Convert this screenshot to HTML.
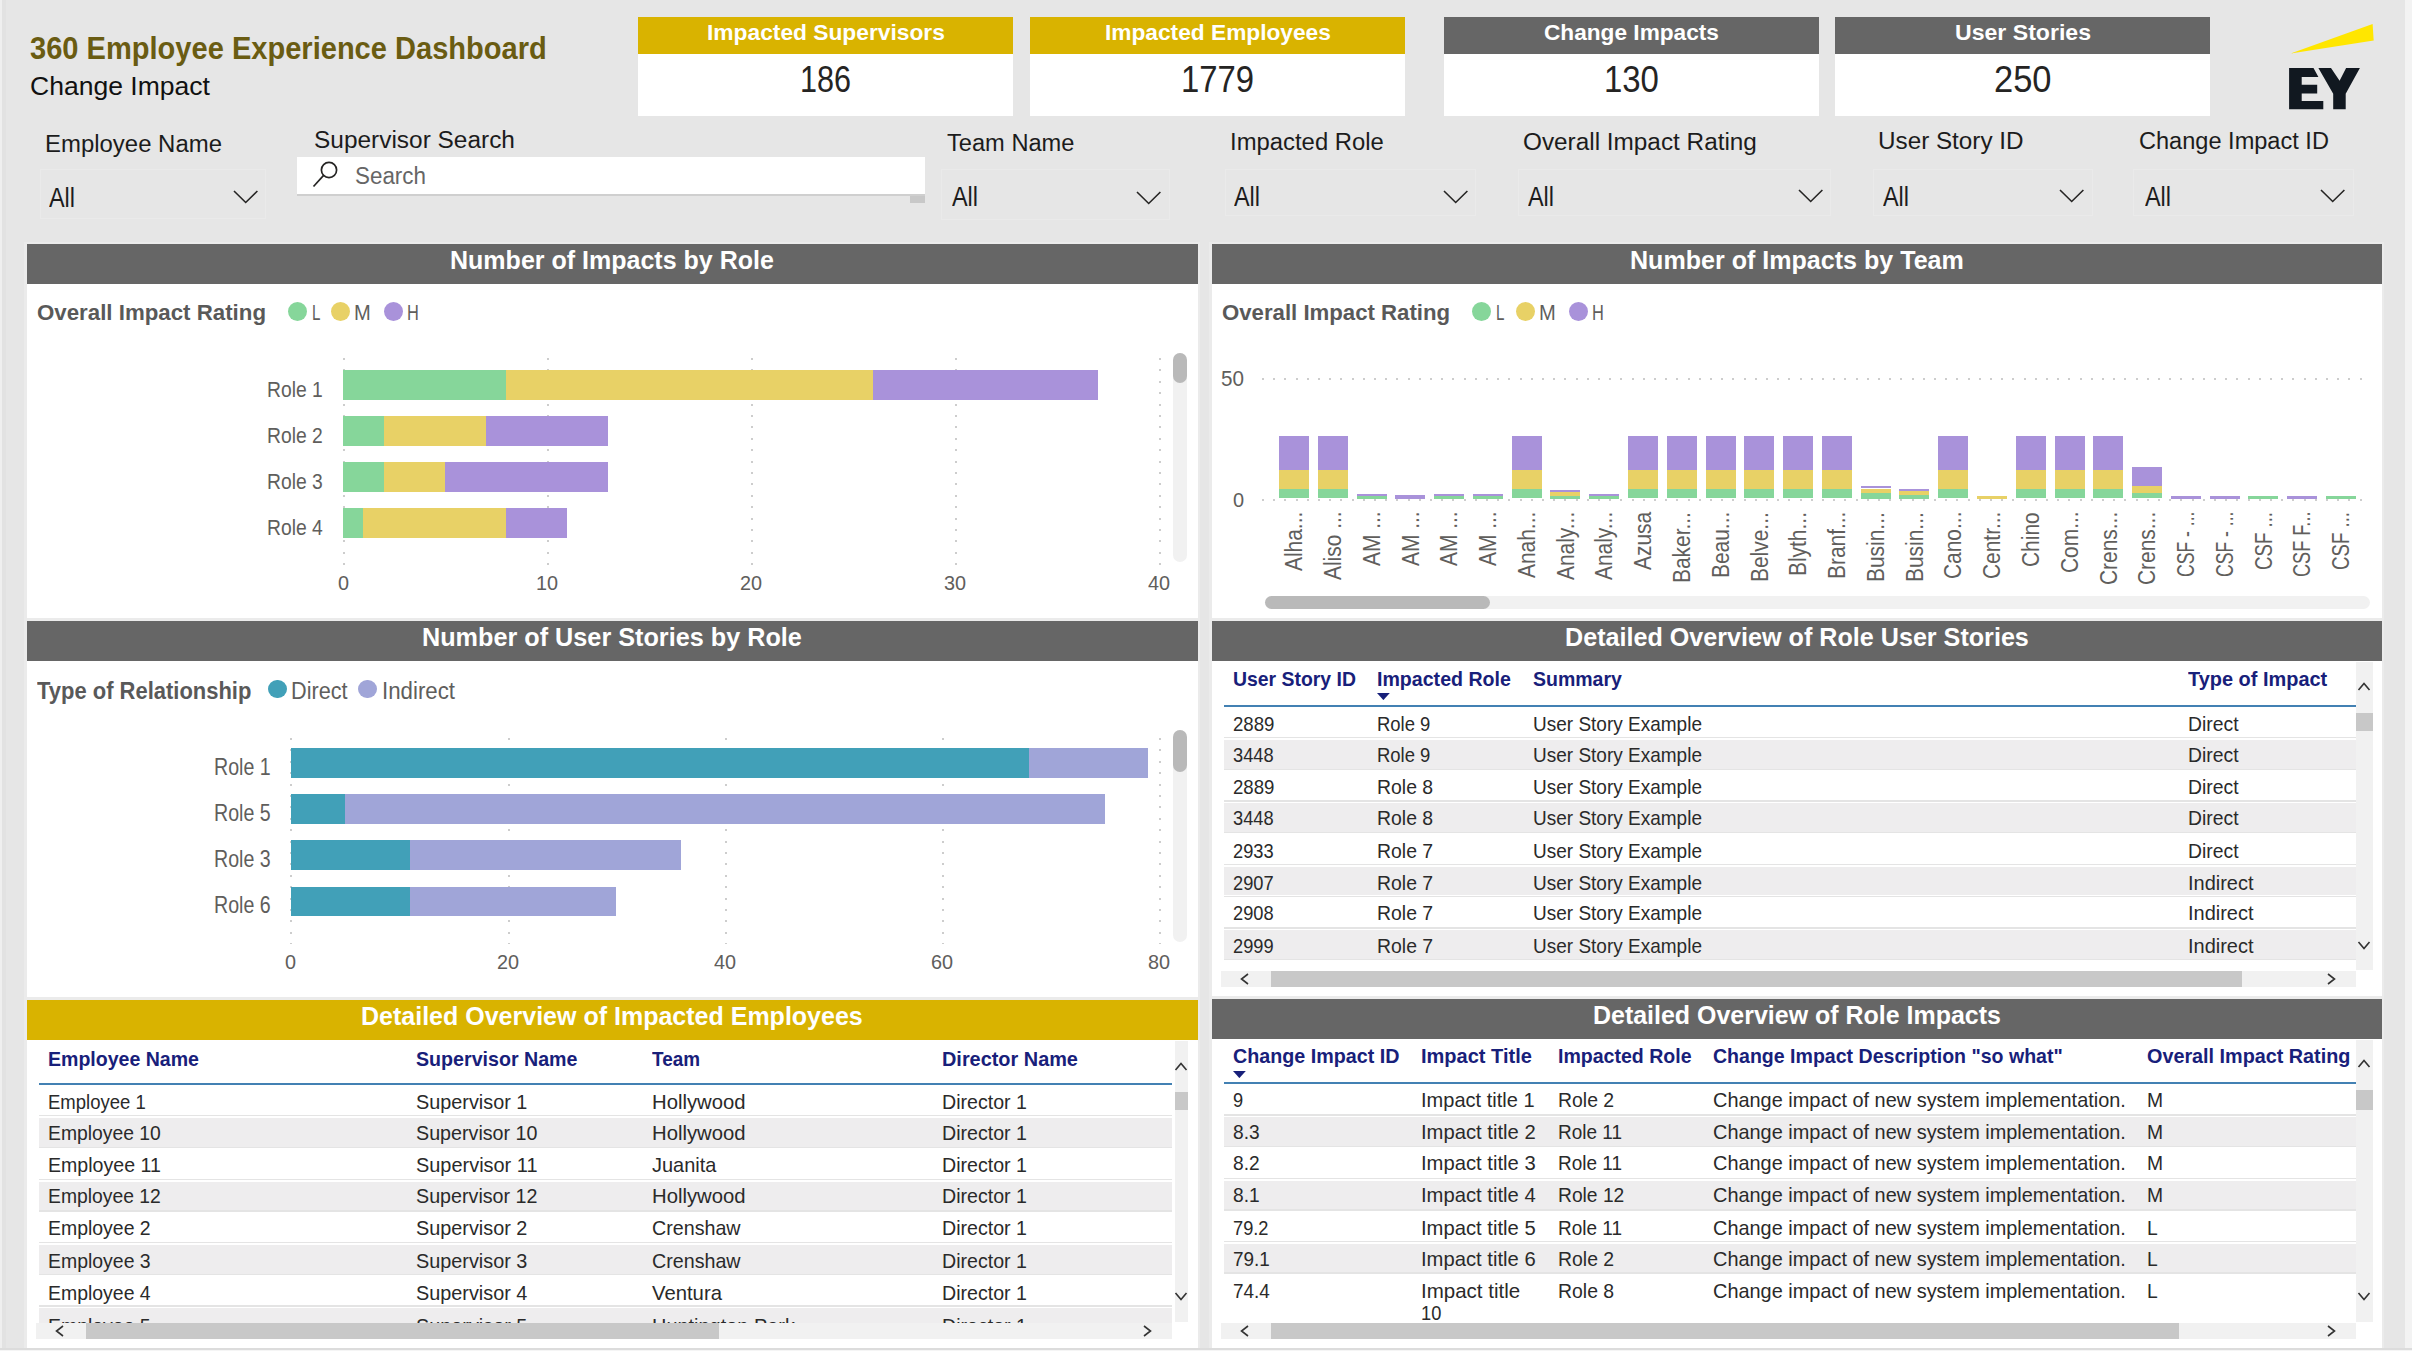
<!DOCTYPE html>
<html><head><meta charset="utf-8"><title>360 Employee Experience Dashboard</title>
<style>
html,body{margin:0;padding:0;}
body{width:2412px;height:1351px;overflow:hidden;position:relative;background:#e6e6e6;font-family:"Liberation Sans",sans-serif;}
.t{position:absolute;white-space:nowrap;transform-origin:0 0;}
.r{position:absolute;}
</style></head><body>
<div class="r" style="left:0.0px;top:0.0px;width:2.0px;height:1351.0px;background:#efefef;"></div>
<div class="r" style="left:2.0px;top:0.0px;width:4.0px;height:1351.0px;background:#e2e2e2;"></div>
<div class="r" style="left:2405.0px;top:0.0px;width:7.0px;height:1351.0px;background:#f3f3f3;"></div>
<div class="r" style="left:0.0px;top:1348.0px;width:2412.0px;height:2.0px;background:#dcdcdc;"></div>
<div class="r" style="left:0.0px;top:1350.0px;width:2412.0px;height:1.0px;background:#f5f5f5;"></div>
<div class="t" style="left:30.0px;top:32.6px;font:bold 30.43px/30.43px 'Liberation Sans',sans-serif;color:#6a5c12;transform:scaleX(0.9551);">360 Employee Experience Dashboard</div>
<div class="t" style="left:30.0px;top:73.3px;font:26.09px/26.09px 'Liberation Sans',sans-serif;color:#111111;transform:scaleX(1.0177);">Change Impact</div>
<div class="r" style="left:638.0px;top:17.0px;width:375.0px;height:36.5px;background:#d9b300;"></div>
<div class="r" style="left:638.0px;top:53.5px;width:375.0px;height:62.5px;background:#ffffff;"></div>
<div class="t" style="left:706.5px;top:21.0px;font:bold 22.90px/22.90px 'Liberation Sans',sans-serif;color:#ffffff;transform:scaleX(0.9946);">Impacted Supervisors</div>
<div class="t" style="left:800.0px;top:61.4px;font:37.68px/37.68px 'Liberation Sans',sans-serif;color:#252423;transform:scaleX(0.8105);">186</div>
<div class="r" style="left:1030.0px;top:17.0px;width:375.0px;height:36.5px;background:#d9b300;"></div>
<div class="r" style="left:1030.0px;top:53.5px;width:375.0px;height:62.5px;background:#ffffff;"></div>
<div class="t" style="left:1104.5px;top:21.0px;font:bold 22.90px/22.90px 'Liberation Sans',sans-serif;color:#ffffff;transform:scaleX(0.9919);">Impacted Employees</div>
<div class="t" style="left:1181.0px;top:61.4px;font:37.68px/37.68px 'Liberation Sans',sans-serif;color:#252423;transform:scaleX(0.8707);">1779</div>
<div class="r" style="left:1444.0px;top:17.0px;width:375.0px;height:36.5px;background:#666666;"></div>
<div class="r" style="left:1444.0px;top:53.5px;width:375.0px;height:62.5px;background:#ffffff;"></div>
<div class="t" style="left:1544.0px;top:21.0px;font:bold 22.90px/22.90px 'Liberation Sans',sans-serif;color:#ffffff;transform:scaleX(0.9893);">Change Impacts</div>
<div class="t" style="left:1604.0px;top:61.4px;font:37.68px/37.68px 'Liberation Sans',sans-serif;color:#252423;transform:scaleX(0.8740);">130</div>
<div class="r" style="left:1835.0px;top:17.0px;width:375.0px;height:36.5px;background:#666666;"></div>
<div class="r" style="left:1835.0px;top:53.5px;width:375.0px;height:62.5px;background:#ffffff;"></div>
<div class="t" style="left:1954.5px;top:21.0px;font:bold 22.90px/22.90px 'Liberation Sans',sans-serif;color:#ffffff;transform:scaleX(1.0084);">User Stories</div>
<div class="t" style="left:1993.7px;top:61.4px;font:37.68px/37.68px 'Liberation Sans',sans-serif;color:#252423;transform:scaleX(0.9153);">250</div>
<svg class="r" style="left:2280px;top:15px;" width="110" height="105" viewBox="0 0 110 105"><polygon points="10.6,38.5 92.6,8.9 93.7,25.6" fill="#ffe600"/><polygon points="9.1,53.1 33.5,53.1 38.4,62.1 21.7,62.1 21.7,69.8 37.2,69.8 37.2,78.4 21.7,78.4 21.7,86.1 43.3,86.1 43.3,94.3 9.1,94.3" fill="#111820"/><polygon points="38.4,53.1 51,53.1 59.6,65.8 66.1,53.1 79.9,53.1 65.7,78.8 65.7,94.3 53.2,94.3 53.2,78.8" fill="#111820"/></svg>
<div class="t" style="left:45.0px;top:131.5px;font:24.64px/24.64px 'Liberation Sans',sans-serif;color:#1c1c1c;transform:scaleX(0.9721);">Employee Name</div>
<div class="r" style="left:39.5px;top:169.0px;width:226.5px;height:49.5px;background:transparent;border:1.5px solid #eaeaea;box-sizing:border-box"></div>
<div class="t" style="left:49.0px;top:184.7px;font:26.81px/26.81px 'Liberation Sans',sans-serif;color:#1c1c1c;transform:scaleX(0.8736);">All</div>
<svg class="r" style="left:231.6px;top:189px;" width="27.4" height="15.5" viewBox="0 0 27.4 15.5"><polyline points="2,2 13.7,13.5 25.4,2" fill="none" stroke="#252423" stroke-width="1.6"/></svg>
<div class="t" style="left:947.0px;top:131.3px;font:24.64px/24.64px 'Liberation Sans',sans-serif;color:#1c1c1c;transform:scaleX(0.9601);">Team Name</div>
<div class="r" style="left:941.0px;top:169.0px;width:229.0px;height:51.0px;background:transparent;border:1.5px solid #eaeaea;box-sizing:border-box"></div>
<div class="t" style="left:952.0px;top:184.4px;font:26.81px/26.81px 'Liberation Sans',sans-serif;color:#1c1c1c;transform:scaleX(0.8736);">All</div>
<svg class="r" style="left:1134.6px;top:189.7px;" width="27.4" height="15.5" viewBox="0 0 27.4 15.5"><polyline points="2,2 13.7,13.5 25.4,2" fill="none" stroke="#252423" stroke-width="1.6"/></svg>
<div class="t" style="left:1230.0px;top:129.5px;font:24.64px/24.64px 'Liberation Sans',sans-serif;color:#1c1c1c;transform:scaleX(0.9691);">Impacted Role</div>
<div class="r" style="left:1225.0px;top:169.0px;width:251.0px;height:47.0px;background:transparent;border:1.5px solid #eaeaea;box-sizing:border-box"></div>
<div class="t" style="left:1234.0px;top:183.7px;font:26.81px/26.81px 'Liberation Sans',sans-serif;color:#1c1c1c;transform:scaleX(0.8736);">All</div>
<svg class="r" style="left:1441.6px;top:188.5px;" width="27.4" height="15.5" viewBox="0 0 27.4 15.5"><polyline points="2,2 13.7,13.5 25.4,2" fill="none" stroke="#252423" stroke-width="1.6"/></svg>
<div class="t" style="left:1523.0px;top:129.5px;font:24.64px/24.64px 'Liberation Sans',sans-serif;color:#1c1c1c;transform:scaleX(0.9878);">Overall Impact Rating</div>
<div class="r" style="left:1518.0px;top:169.0px;width:313.0px;height:47.0px;background:transparent;border:1.5px solid #eaeaea;box-sizing:border-box"></div>
<div class="t" style="left:1528.0px;top:183.5px;font:26.81px/26.81px 'Liberation Sans',sans-serif;color:#1c1c1c;transform:scaleX(0.8736);">All</div>
<svg class="r" style="left:1796.6px;top:188px;" width="27.4" height="15.5" viewBox="0 0 27.4 15.5"><polyline points="2,2 13.7,13.5 25.4,2" fill="none" stroke="#252423" stroke-width="1.6"/></svg>
<div class="t" style="left:1878.0px;top:129.2px;font:24.64px/24.64px 'Liberation Sans',sans-serif;color:#1c1c1c;transform:scaleX(0.9849);">User Story ID</div>
<div class="r" style="left:1873.0px;top:169.0px;width:220.0px;height:47.0px;background:transparent;border:1.5px solid #eaeaea;box-sizing:border-box"></div>
<div class="t" style="left:1883.0px;top:183.5px;font:26.81px/26.81px 'Liberation Sans',sans-serif;color:#1c1c1c;transform:scaleX(0.8736);">All</div>
<svg class="r" style="left:2057.6px;top:188px;" width="27.4" height="15.5" viewBox="0 0 27.4 15.5"><polyline points="2,2 13.7,13.5 25.4,2" fill="none" stroke="#252423" stroke-width="1.6"/></svg>
<div class="t" style="left:2139.0px;top:129.2px;font:24.64px/24.64px 'Liberation Sans',sans-serif;color:#1c1c1c;transform:scaleX(0.9568);">Change Impact ID</div>
<div class="r" style="left:2133.0px;top:169.0px;width:221.0px;height:47.0px;background:transparent;border:1.5px solid #eaeaea;box-sizing:border-box"></div>
<div class="t" style="left:2145.0px;top:183.5px;font:26.81px/26.81px 'Liberation Sans',sans-serif;color:#1c1c1c;transform:scaleX(0.8736);">All</div>
<svg class="r" style="left:2318.6px;top:188px;" width="27.4" height="15.5" viewBox="0 0 27.4 15.5"><polyline points="2,2 13.7,13.5 25.4,2" fill="none" stroke="#252423" stroke-width="1.6"/></svg>
<div class="t" style="left:313.5px;top:127.5px;font:23.91px/23.91px 'Liberation Sans',sans-serif;color:#1c1c1c;transform:scaleX(1.0219);">Supervisor Search</div>
<div class="r" style="left:297.0px;top:157.0px;width:628.0px;height:37.0px;background:#ffffff;"></div>
<div class="r" style="left:297.0px;top:194.0px;width:628.0px;height:2.0px;background:#cfcfcf;"></div>
<div class="r" style="left:910.0px;top:196.0px;width:15.0px;height:6.6px;background:#c8c8c8;"></div>
<svg class="r" style="left:308px;top:158px;" width="32" height="32" viewBox="0 0 32 32"><circle cx="21" cy="12" r="7.6" fill="none" stroke="#252423" stroke-width="1.7"/><line x1="15.6" y1="17.4" x2="5.5" y2="28.5" stroke="#252423" stroke-width="1.7"/></svg>
<div class="t" style="left:355.0px;top:163.9px;font:24.64px/24.64px 'Liberation Sans',sans-serif;color:#666666;transform:scaleX(0.9091);">Search</div>
<div class="r" style="left:24.3px;top:241.5px;width:1176.2px;height:378.5px;background:#ebebeb;"></div>
<div class="r" style="left:26.8px;top:284.0px;width:1171.2px;height:333.5px;background:#ffffff;"></div>
<div class="r" style="left:26.8px;top:244.0px;width:1171.2px;height:40.0px;background:#666666;"></div>
<div class="t" style="left:450.4px;top:247.3px;font:bold 26.09px/26.09px 'Liberation Sans',sans-serif;color:#ffffff;transform:scaleX(0.9594);">Number of Impacts by Role</div>
<div class="r" style="left:1209.0px;top:241.5px;width:1175.0px;height:378.5px;background:#ebebeb;"></div>
<div class="r" style="left:1211.5px;top:284.0px;width:1170.0px;height:333.5px;background:#ffffff;"></div>
<div class="r" style="left:1211.5px;top:244.0px;width:1170.0px;height:40.0px;background:#666666;"></div>
<div class="t" style="left:1629.5px;top:247.3px;font:bold 26.09px/26.09px 'Liberation Sans',sans-serif;color:#ffffff;transform:scaleX(0.9612);">Number of Impacts by Team</div>
<div class="r" style="left:24.3px;top:618.5px;width:1176.2px;height:380.5px;background:#ebebeb;"></div>
<div class="r" style="left:26.8px;top:661.0px;width:1171.2px;height:335.5px;background:#ffffff;"></div>
<div class="r" style="left:26.8px;top:621.0px;width:1171.2px;height:40.0px;background:#666666;"></div>
<div class="t" style="left:422.4px;top:624.3px;font:bold 26.09px/26.09px 'Liberation Sans',sans-serif;color:#ffffff;transform:scaleX(0.9672);">Number of User Stories by Role</div>
<div class="r" style="left:1209.0px;top:618.5px;width:1175.0px;height:380.0px;background:#ebebeb;"></div>
<div class="r" style="left:1211.5px;top:661.0px;width:1170.0px;height:335.0px;background:#ffffff;"></div>
<div class="r" style="left:1211.5px;top:621.0px;width:1170.0px;height:40.0px;background:#666666;"></div>
<div class="t" style="left:1564.5px;top:624.3px;font:bold 26.09px/26.09px 'Liberation Sans',sans-serif;color:#ffffff;transform:scaleX(0.9640);">Detailed Overview of Role User Stories</div>
<div class="r" style="left:24.3px;top:997.5px;width:1176.2px;height:350.5px;background:#ebebeb;"></div>
<div class="r" style="left:26.8px;top:1040.0px;width:1171.2px;height:308.0px;background:#ffffff;"></div>
<div class="r" style="left:26.8px;top:1000.0px;width:1171.2px;height:40.0px;background:#d9b300;"></div>
<div class="t" style="left:361.4px;top:1003.3px;font:bold 26.09px/26.09px 'Liberation Sans',sans-serif;color:#ffffff;transform:scaleX(0.9590);">Detailed Overview of Impacted Employees</div>
<div class="r" style="left:1209.0px;top:996.5px;width:1175.0px;height:351.5px;background:#ebebeb;"></div>
<div class="r" style="left:1211.5px;top:1039.0px;width:1170.0px;height:309.0px;background:#ffffff;"></div>
<div class="r" style="left:1211.5px;top:999.0px;width:1170.0px;height:40.0px;background:#666666;"></div>
<div class="t" style="left:1592.5px;top:1002.3px;font:bold 26.09px/26.09px 'Liberation Sans',sans-serif;color:#ffffff;transform:scaleX(0.9572);">Detailed Overview of Role Impacts</div>
<div class="t" style="left:36.6px;top:301.7px;font:bold 22.61px/22.61px 'Liberation Sans',sans-serif;color:#595959;transform:scaleX(0.9853);">Overall Impact Rating</div>
<div class="r" style="left:287.5px;top:302.0px;width:19px;height:19px;border-radius:50%;background:#86d69a"></div>
<div class="t" style="left:312.0px;top:301.7px;font:22.61px/22.61px 'Liberation Sans',sans-serif;color:#605e5c;transform:scaleX(0.6694);">L</div>
<div class="r" style="left:330.5px;top:302.0px;width:19px;height:19px;border-radius:50%;background:#e8d166"></div>
<div class="t" style="left:354.0px;top:301.7px;font:22.61px/22.61px 'Liberation Sans',sans-serif;color:#605e5c;transform:scaleX(0.8899);">M</div>
<div class="r" style="left:383.5px;top:302.0px;width:19px;height:19px;border-radius:50%;background:#a992da"></div>
<div class="t" style="left:407.0px;top:301.7px;font:22.61px/22.61px 'Liberation Sans',sans-serif;color:#605e5c;transform:scaleX(0.7249);">H</div>
<div class="t" style="left:1221.7px;top:301.7px;font:bold 22.61px/22.61px 'Liberation Sans',sans-serif;color:#595959;transform:scaleX(0.9810);">Overall Impact Rating</div>
<div class="r" style="left:1472.0px;top:302.0px;width:19px;height:19px;border-radius:50%;background:#86d69a"></div>
<div class="t" style="left:1496.0px;top:301.7px;font:22.61px/22.61px 'Liberation Sans',sans-serif;color:#605e5c;transform:scaleX(0.6694);">L</div>
<div class="r" style="left:1515.5px;top:302.0px;width:19px;height:19px;border-radius:50%;background:#e8d166"></div>
<div class="t" style="left:1539.3px;top:301.7px;font:22.61px/22.61px 'Liberation Sans',sans-serif;color:#605e5c;transform:scaleX(0.8899);">M</div>
<div class="r" style="left:1568.8px;top:302.0px;width:19px;height:19px;border-radius:50%;background:#a992da"></div>
<div class="t" style="left:1592.0px;top:301.7px;font:22.61px/22.61px 'Liberation Sans',sans-serif;color:#605e5c;transform:scaleX(0.7249);">H</div>
<div class="r" style="left:342.9px;top:358.0px;width:2px;height:208.0px;background:repeating-linear-gradient(to bottom,#cdcdcd 0 2px,transparent 2px 11.4px)"></div>
<div class="t" style="left:337.5px;top:573.0px;font:20.87px/20.87px 'Liberation Sans',sans-serif;color:#605e5c;transform:scaleX(0.9500);">0</div>
<div class="r" style="left:546.9px;top:358.0px;width:2px;height:208.0px;background:repeating-linear-gradient(to bottom,#cdcdcd 0 2px,transparent 2px 11.4px)"></div>
<div class="t" style="left:536.0px;top:573.0px;font:20.87px/20.87px 'Liberation Sans',sans-serif;color:#605e5c;transform:scaleX(0.9500);">10</div>
<div class="r" style="left:750.9px;top:358.0px;width:2px;height:208.0px;background:repeating-linear-gradient(to bottom,#cdcdcd 0 2px,transparent 2px 11.4px)"></div>
<div class="t" style="left:740.0px;top:573.0px;font:20.87px/20.87px 'Liberation Sans',sans-serif;color:#605e5c;transform:scaleX(0.9500);">20</div>
<div class="r" style="left:954.9px;top:358.0px;width:2px;height:208.0px;background:repeating-linear-gradient(to bottom,#cdcdcd 0 2px,transparent 2px 11.4px)"></div>
<div class="t" style="left:944.0px;top:573.0px;font:20.87px/20.87px 'Liberation Sans',sans-serif;color:#605e5c;transform:scaleX(0.9500);">30</div>
<div class="r" style="left:1158.9px;top:358.0px;width:2px;height:208.0px;background:repeating-linear-gradient(to bottom,#cdcdcd 0 2px,transparent 2px 11.4px)"></div>
<div class="t" style="left:1148.0px;top:573.0px;font:20.87px/20.87px 'Liberation Sans',sans-serif;color:#605e5c;transform:scaleX(0.9500);">40</div>
<div class="r" style="left:343.0px;top:370.0px;width:163.2px;height:30.0px;background:#86d69a;"></div>
<div class="r" style="left:506.2px;top:370.0px;width:367.2px;height:30.0px;background:#e8d166;"></div>
<div class="r" style="left:873.4px;top:370.0px;width:224.4px;height:30.0px;background:#a992da;"></div>
<div class="t" style="left:266.5px;top:377.8px;font:22.90px/22.90px 'Liberation Sans',sans-serif;color:#605e5c;transform:scaleX(0.8432);">Role 1</div>
<div class="r" style="left:343.0px;top:416.0px;width:40.8px;height:30.0px;background:#86d69a;"></div>
<div class="r" style="left:383.8px;top:416.0px;width:102.0px;height:30.0px;background:#e8d166;"></div>
<div class="r" style="left:485.8px;top:416.0px;width:122.4px;height:30.0px;background:#a992da;"></div>
<div class="t" style="left:266.5px;top:423.8px;font:22.90px/22.90px 'Liberation Sans',sans-serif;color:#605e5c;transform:scaleX(0.8432);">Role 2</div>
<div class="r" style="left:343.0px;top:462.0px;width:40.8px;height:30.0px;background:#86d69a;"></div>
<div class="r" style="left:383.8px;top:462.0px;width:61.2px;height:30.0px;background:#e8d166;"></div>
<div class="r" style="left:445.0px;top:462.0px;width:163.2px;height:30.0px;background:#a992da;"></div>
<div class="t" style="left:266.5px;top:469.8px;font:22.90px/22.90px 'Liberation Sans',sans-serif;color:#605e5c;transform:scaleX(0.8432);">Role 3</div>
<div class="r" style="left:343.0px;top:508.0px;width:20.4px;height:30.0px;background:#86d69a;"></div>
<div class="r" style="left:363.4px;top:508.0px;width:142.8px;height:30.0px;background:#e8d166;"></div>
<div class="r" style="left:506.2px;top:508.0px;width:61.2px;height:30.0px;background:#a992da;"></div>
<div class="t" style="left:266.5px;top:515.8px;font:22.90px/22.90px 'Liberation Sans',sans-serif;color:#605e5c;transform:scaleX(0.8432);">Role 4</div>
<div class="r" style="left:1173.0px;top:352.7px;width:13.5px;height:209.3px;background:#f1f1f1;border-radius:7px"></div>
<div class="r" style="left:1173.0px;top:352.7px;width:13.5px;height:30.3px;background:#b9b9b9;border-radius:7px"></div>
<div class="t" style="left:1221.3px;top:367.5px;font:21.74px/21.74px 'Liberation Sans',sans-serif;color:#605e5c;transform:scaleX(0.9500);">50</div>
<div class="t" style="left:1233.1px;top:488.6px;font:21.01px/21.01px 'Liberation Sans',sans-serif;color:#605e5c;transform:scaleX(0.9500);">0</div>
<div class="r" style="left:1262.0px;top:377.7px;width:1100.0px;height:2px;background:repeating-linear-gradient(to right,#cdcdcd 0 2px,transparent 2px 11.2px)"></div>
<div class="r" style="left:1262.0px;top:499.0px;width:1100.0px;height:2px;background:repeating-linear-gradient(to right,#cdcdcd 0 2px,transparent 2px 11.2px)"></div>
<div class="r" style="left:1279.0px;top:436.0px;width:30.0px;height:33.5px;background:#a992da;"></div>
<div class="r" style="left:1279.0px;top:469.5px;width:30.0px;height:19.9px;background:#e8d166;"></div>
<div class="r" style="left:1279.0px;top:489.4px;width:30.0px;height:9.1px;background:#86d69a;"></div>
<div class="t" style="left:1282.2px;top:571.1px;font:23.91px/23.91px 'Liberation Sans',sans-serif;color:#605e5c;transform-origin:0 0;transform:rotate(-90deg) scaleX(0.875)">Alha...</div>
<div class="r" style="left:1317.8px;top:436.0px;width:30.0px;height:33.5px;background:#a992da;"></div>
<div class="r" style="left:1317.8px;top:469.5px;width:30.0px;height:19.9px;background:#e8d166;"></div>
<div class="r" style="left:1317.8px;top:489.4px;width:30.0px;height:9.1px;background:#86d69a;"></div>
<div class="t" style="left:1321.0px;top:580.4px;font:23.91px/23.91px 'Liberation Sans',sans-serif;color:#605e5c;transform-origin:0 0;transform:rotate(-90deg) scaleX(0.8750000000000001)">Aliso ...</div>
<div class="r" style="left:1356.6px;top:494.0px;width:30.0px;height:2.0px;background:#a992da;"></div>
<div class="r" style="left:1356.6px;top:496.0px;width:30.0px;height:2.5px;background:#86d69a;"></div>
<div class="t" style="left:1359.7px;top:566.4px;font:23.91px/23.91px 'Liberation Sans',sans-serif;color:#605e5c;transform-origin:0 0;transform:rotate(-90deg) scaleX(0.875)">AM ...</div>
<div class="r" style="left:1395.3px;top:495.0px;width:30.0px;height:3.5px;background:#a992da;"></div>
<div class="t" style="left:1398.5px;top:566.4px;font:23.91px/23.91px 'Liberation Sans',sans-serif;color:#605e5c;transform-origin:0 0;transform:rotate(-90deg) scaleX(0.875)">AM ...</div>
<div class="r" style="left:1434.1px;top:494.0px;width:30.0px;height:2.0px;background:#a992da;"></div>
<div class="r" style="left:1434.1px;top:496.0px;width:30.0px;height:2.5px;background:#86d69a;"></div>
<div class="t" style="left:1437.3px;top:566.4px;font:23.91px/23.91px 'Liberation Sans',sans-serif;color:#605e5c;transform-origin:0 0;transform:rotate(-90deg) scaleX(0.875)">AM ...</div>
<div class="r" style="left:1472.9px;top:494.0px;width:30.0px;height:2.0px;background:#a992da;"></div>
<div class="r" style="left:1472.9px;top:496.0px;width:30.0px;height:2.5px;background:#86d69a;"></div>
<div class="t" style="left:1476.1px;top:566.4px;font:23.91px/23.91px 'Liberation Sans',sans-serif;color:#605e5c;transform-origin:0 0;transform:rotate(-90deg) scaleX(0.875)">AM ...</div>
<div class="r" style="left:1511.7px;top:436.0px;width:30.0px;height:33.5px;background:#a992da;"></div>
<div class="r" style="left:1511.7px;top:469.5px;width:30.0px;height:19.9px;background:#e8d166;"></div>
<div class="r" style="left:1511.7px;top:489.4px;width:30.0px;height:9.1px;background:#86d69a;"></div>
<div class="t" style="left:1514.8px;top:578.1px;font:23.91px/23.91px 'Liberation Sans',sans-serif;color:#605e5c;transform-origin:0 0;transform:rotate(-90deg) scaleX(0.875)">Anah...</div>
<div class="r" style="left:1550.4px;top:489.5px;width:30.0px;height:2.0px;background:#a992da;"></div>
<div class="r" style="left:1550.4px;top:491.5px;width:30.0px;height:4.0px;background:#e8d166;"></div>
<div class="r" style="left:1550.4px;top:495.5px;width:30.0px;height:3.0px;background:#86d69a;"></div>
<div class="t" style="left:1553.6px;top:580.0px;font:23.91px/23.91px 'Liberation Sans',sans-serif;color:#605e5c;transform-origin:0 0;transform:rotate(-90deg) scaleX(0.8749999999999999)">Analy...</div>
<div class="r" style="left:1589.2px;top:494.0px;width:30.0px;height:2.0px;background:#a992da;"></div>
<div class="r" style="left:1589.2px;top:496.0px;width:30.0px;height:2.5px;background:#86d69a;"></div>
<div class="t" style="left:1592.4px;top:580.0px;font:23.91px/23.91px 'Liberation Sans',sans-serif;color:#605e5c;transform-origin:0 0;transform:rotate(-90deg) scaleX(0.8749999999999999)">Analy...</div>
<div class="r" style="left:1628.0px;top:436.0px;width:30.0px;height:33.5px;background:#a992da;"></div>
<div class="r" style="left:1628.0px;top:469.5px;width:30.0px;height:19.9px;background:#e8d166;"></div>
<div class="r" style="left:1628.0px;top:489.4px;width:30.0px;height:9.1px;background:#86d69a;"></div>
<div class="t" style="left:1631.2px;top:570.0px;font:23.91px/23.91px 'Liberation Sans',sans-serif;color:#605e5c;transform-origin:0 0;transform:rotate(-90deg) scaleX(0.875)">Azusa</div>
<div class="r" style="left:1666.8px;top:436.0px;width:30.0px;height:33.5px;background:#a992da;"></div>
<div class="r" style="left:1666.8px;top:469.5px;width:30.0px;height:19.9px;background:#e8d166;"></div>
<div class="r" style="left:1666.8px;top:489.4px;width:30.0px;height:9.1px;background:#86d69a;"></div>
<div class="t" style="left:1670.0px;top:582.7px;font:23.91px/23.91px 'Liberation Sans',sans-serif;color:#605e5c;transform-origin:0 0;transform:rotate(-90deg) scaleX(0.875)">Baker...</div>
<div class="r" style="left:1705.6px;top:436.0px;width:30.0px;height:33.5px;background:#a992da;"></div>
<div class="r" style="left:1705.6px;top:469.5px;width:30.0px;height:19.9px;background:#e8d166;"></div>
<div class="r" style="left:1705.6px;top:489.4px;width:30.0px;height:9.1px;background:#86d69a;"></div>
<div class="t" style="left:1708.7px;top:578.1px;font:23.91px/23.91px 'Liberation Sans',sans-serif;color:#605e5c;transform-origin:0 0;transform:rotate(-90deg) scaleX(0.875)">Beau...</div>
<div class="r" style="left:1744.3px;top:436.0px;width:30.0px;height:33.5px;background:#a992da;"></div>
<div class="r" style="left:1744.3px;top:469.5px;width:30.0px;height:19.9px;background:#e8d166;"></div>
<div class="r" style="left:1744.3px;top:489.4px;width:30.0px;height:9.1px;background:#86d69a;"></div>
<div class="t" style="left:1747.5px;top:581.6px;font:23.91px/23.91px 'Liberation Sans',sans-serif;color:#605e5c;transform-origin:0 0;transform:rotate(-90deg) scaleX(0.875)">Belve...</div>
<div class="r" style="left:1783.1px;top:436.0px;width:30.0px;height:33.5px;background:#a992da;"></div>
<div class="r" style="left:1783.1px;top:469.5px;width:30.0px;height:19.9px;background:#e8d166;"></div>
<div class="r" style="left:1783.1px;top:489.4px;width:30.0px;height:9.1px;background:#86d69a;"></div>
<div class="t" style="left:1786.3px;top:575.8px;font:23.91px/23.91px 'Liberation Sans',sans-serif;color:#605e5c;transform-origin:0 0;transform:rotate(-90deg) scaleX(0.875)">Blyth...</div>
<div class="r" style="left:1821.9px;top:436.0px;width:30.0px;height:33.5px;background:#a992da;"></div>
<div class="r" style="left:1821.9px;top:469.5px;width:30.0px;height:19.9px;background:#e8d166;"></div>
<div class="r" style="left:1821.9px;top:489.4px;width:30.0px;height:9.1px;background:#86d69a;"></div>
<div class="t" style="left:1825.1px;top:579.3px;font:23.91px/23.91px 'Liberation Sans',sans-serif;color:#605e5c;transform-origin:0 0;transform:rotate(-90deg) scaleX(0.875)">Branf...</div>
<div class="r" style="left:1860.7px;top:486.3px;width:30.0px;height:2.2px;background:#a992da;"></div>
<div class="r" style="left:1860.7px;top:488.5px;width:30.0px;height:4.5px;background:#e8d166;"></div>
<div class="r" style="left:1860.7px;top:493.0px;width:30.0px;height:5.5px;background:#86d69a;"></div>
<div class="t" style="left:1863.8px;top:581.6px;font:23.91px/23.91px 'Liberation Sans',sans-serif;color:#605e5c;transform-origin:0 0;transform:rotate(-90deg) scaleX(0.875)">Busin...</div>
<div class="r" style="left:1899.4px;top:488.5px;width:30.0px;height:2.0px;background:#a992da;"></div>
<div class="r" style="left:1899.4px;top:490.5px;width:30.0px;height:4.5px;background:#e8d166;"></div>
<div class="r" style="left:1899.4px;top:495.0px;width:30.0px;height:3.5px;background:#86d69a;"></div>
<div class="t" style="left:1902.6px;top:581.6px;font:23.91px/23.91px 'Liberation Sans',sans-serif;color:#605e5c;transform-origin:0 0;transform:rotate(-90deg) scaleX(0.875)">Busin...</div>
<div class="r" style="left:1938.2px;top:436.0px;width:30.0px;height:33.5px;background:#a992da;"></div>
<div class="r" style="left:1938.2px;top:469.5px;width:30.0px;height:19.9px;background:#e8d166;"></div>
<div class="r" style="left:1938.2px;top:489.4px;width:30.0px;height:9.1px;background:#86d69a;"></div>
<div class="t" style="left:1941.4px;top:579.3px;font:23.91px/23.91px 'Liberation Sans',sans-serif;color:#605e5c;transform-origin:0 0;transform:rotate(-90deg) scaleX(0.8749999999999999)">Cano...</div>
<div class="r" style="left:1977.0px;top:496.0px;width:30.0px;height:2.5px;background:#e8d166;"></div>
<div class="t" style="left:1980.2px;top:579.3px;font:23.91px/23.91px 'Liberation Sans',sans-serif;color:#605e5c;transform-origin:0 0;transform:rotate(-90deg) scaleX(0.875)">Centr...</div>
<div class="r" style="left:2015.8px;top:436.0px;width:30.0px;height:33.5px;background:#a992da;"></div>
<div class="r" style="left:2015.8px;top:469.5px;width:30.0px;height:19.9px;background:#e8d166;"></div>
<div class="r" style="left:2015.8px;top:489.4px;width:30.0px;height:9.1px;background:#86d69a;"></div>
<div class="t" style="left:2019.0px;top:566.5px;font:23.91px/23.91px 'Liberation Sans',sans-serif;color:#605e5c;transform-origin:0 0;transform:rotate(-90deg) scaleX(0.8749999999999999)">Chino</div>
<div class="r" style="left:2054.6px;top:436.0px;width:30.0px;height:33.5px;background:#a992da;"></div>
<div class="r" style="left:2054.6px;top:469.5px;width:30.0px;height:19.9px;background:#e8d166;"></div>
<div class="r" style="left:2054.6px;top:489.4px;width:30.0px;height:9.1px;background:#86d69a;"></div>
<div class="t" style="left:2057.7px;top:573.4px;font:23.91px/23.91px 'Liberation Sans',sans-serif;color:#605e5c;transform-origin:0 0;transform:rotate(-90deg) scaleX(0.875)">Com...</div>
<div class="r" style="left:2093.3px;top:436.0px;width:30.0px;height:33.5px;background:#a992da;"></div>
<div class="r" style="left:2093.3px;top:469.5px;width:30.0px;height:19.9px;background:#e8d166;"></div>
<div class="r" style="left:2093.3px;top:489.4px;width:30.0px;height:9.1px;background:#86d69a;"></div>
<div class="t" style="left:2096.5px;top:585.1px;font:23.91px/23.91px 'Liberation Sans',sans-serif;color:#605e5c;transform-origin:0 0;transform:rotate(-90deg) scaleX(0.875)">Crens...</div>
<div class="r" style="left:2132.1px;top:467.3px;width:30.0px;height:19.0px;background:#a992da;"></div>
<div class="r" style="left:2132.1px;top:486.3px;width:30.0px;height:7.0px;background:#e8d166;"></div>
<div class="r" style="left:2132.1px;top:493.3px;width:30.0px;height:5.2px;background:#86d69a;"></div>
<div class="t" style="left:2135.3px;top:585.1px;font:23.91px/23.91px 'Liberation Sans',sans-serif;color:#605e5c;transform-origin:0 0;transform:rotate(-90deg) scaleX(0.875)">Crens...</div>
<div class="r" style="left:2170.9px;top:496.0px;width:30.0px;height:2.5px;background:#a992da;"></div>
<div class="t" style="left:2174.1px;top:577.3px;font:23.91px/23.91px 'Liberation Sans',sans-serif;color:#605e5c;transform-origin:0 0;transform:rotate(-90deg) scaleX(0.7358820341777271)">CSF - ...</div>
<div class="r" style="left:2209.7px;top:496.0px;width:30.0px;height:2.5px;background:#a992da;"></div>
<div class="t" style="left:2212.8px;top:577.3px;font:23.91px/23.91px 'Liberation Sans',sans-serif;color:#605e5c;transform-origin:0 0;transform:rotate(-90deg) scaleX(0.7358820341777271)">CSF - ...</div>
<div class="r" style="left:2248.4px;top:496.0px;width:30.0px;height:2.5px;background:#86d69a;"></div>
<div class="t" style="left:2251.6px;top:569.8px;font:23.91px/23.91px 'Liberation Sans',sans-serif;color:#605e5c;transform-origin:0 0;transform:rotate(-90deg) scaleX(0.7795560120983849)">CSF ...</div>
<div class="r" style="left:2287.2px;top:496.0px;width:30.0px;height:2.5px;background:#a992da;"></div>
<div class="t" style="left:2290.4px;top:577.3px;font:23.91px/23.91px 'Liberation Sans',sans-serif;color:#605e5c;transform-origin:0 0;transform:rotate(-90deg) scaleX(0.7584719012734157)">CSF F...</div>
<div class="r" style="left:2326.0px;top:496.0px;width:30.0px;height:2.5px;background:#86d69a;"></div>
<div class="t" style="left:2329.2px;top:569.8px;font:23.91px/23.91px 'Liberation Sans',sans-serif;color:#605e5c;transform-origin:0 0;transform:rotate(-90deg) scaleX(0.7795560120983849)">CSF ...</div>
<div class="r" style="left:1265.0px;top:595.7px;width:1105.0px;height:13.1px;background:#f1f1f1;border-radius:7px"></div>
<div class="r" style="left:1265.0px;top:595.7px;width:225.0px;height:13.1px;background:#b9b9b9;border-radius:7px"></div>
<div class="t" style="left:37.3px;top:678.5px;font:bold 23.77px/23.77px 'Liberation Sans',sans-serif;color:#595959;transform:scaleX(0.9242);">Type of Relationship</div>
<div class="r" style="left:268.1px;top:679.8px;width:18.5px;height:18.5px;border-radius:50%;background:#41a0b8"></div>
<div class="t" style="left:291.0px;top:678.5px;font:23.77px/23.77px 'Liberation Sans',sans-serif;color:#605e5c;transform:scaleX(0.9108);">Direct</div>
<div class="r" style="left:358.4px;top:679.8px;width:18.5px;height:18.5px;border-radius:50%;background:#a0a5d8"></div>
<div class="t" style="left:382.0px;top:678.5px;font:23.77px/23.77px 'Liberation Sans',sans-serif;color:#605e5c;transform:scaleX(0.9364);">Indirect</div>
<div class="r" style="left:290.4px;top:738.0px;width:2px;height:206.0px;background:repeating-linear-gradient(to bottom,#cdcdcd 0 2px,transparent 2px 11.4px)"></div>
<div class="t" style="left:285.0px;top:952.0px;font:20.87px/20.87px 'Liberation Sans',sans-serif;color:#605e5c;transform:scaleX(0.9500);">0</div>
<div class="r" style="left:507.5px;top:738.0px;width:2px;height:206.0px;background:repeating-linear-gradient(to bottom,#cdcdcd 0 2px,transparent 2px 11.4px)"></div>
<div class="t" style="left:496.6px;top:952.0px;font:20.87px/20.87px 'Liberation Sans',sans-serif;color:#605e5c;transform:scaleX(0.9500);">20</div>
<div class="r" style="left:724.7px;top:738.0px;width:2px;height:206.0px;background:repeating-linear-gradient(to bottom,#cdcdcd 0 2px,transparent 2px 11.4px)"></div>
<div class="t" style="left:713.8px;top:952.0px;font:20.87px/20.87px 'Liberation Sans',sans-serif;color:#605e5c;transform:scaleX(0.9500);">40</div>
<div class="r" style="left:941.8px;top:738.0px;width:2px;height:206.0px;background:repeating-linear-gradient(to bottom,#cdcdcd 0 2px,transparent 2px 11.4px)"></div>
<div class="t" style="left:930.9px;top:952.0px;font:20.87px/20.87px 'Liberation Sans',sans-serif;color:#605e5c;transform:scaleX(0.9500);">60</div>
<div class="r" style="left:1159.0px;top:738.0px;width:2px;height:206.0px;background:repeating-linear-gradient(to bottom,#cdcdcd 0 2px,transparent 2px 11.4px)"></div>
<div class="t" style="left:1148.1px;top:952.0px;font:20.87px/20.87px 'Liberation Sans',sans-serif;color:#605e5c;transform:scaleX(0.9500);">80</div>
<div class="r" style="left:290.5px;top:748.0px;width:738.3px;height:29.5px;background:#41a0b8;"></div>
<div class="r" style="left:1028.8px;top:748.0px;width:119.4px;height:29.5px;background:#a0a5d8;"></div>
<div class="t" style="left:213.8px;top:755.7px;font:23.19px/23.19px 'Liberation Sans',sans-serif;color:#605e5c;transform:scaleX(0.8446);">Role 1</div>
<div class="r" style="left:290.5px;top:794.2px;width:54.3px;height:29.5px;background:#41a0b8;"></div>
<div class="r" style="left:344.8px;top:794.2px;width:760.0px;height:29.5px;background:#a0a5d8;"></div>
<div class="t" style="left:213.8px;top:801.9px;font:23.19px/23.19px 'Liberation Sans',sans-serif;color:#605e5c;transform:scaleX(0.8446);">Role 5</div>
<div class="r" style="left:290.5px;top:840.3px;width:119.4px;height:29.5px;background:#41a0b8;"></div>
<div class="r" style="left:409.9px;top:840.3px;width:271.4px;height:29.5px;background:#a0a5d8;"></div>
<div class="t" style="left:213.8px;top:848.1px;font:23.19px/23.19px 'Liberation Sans',sans-serif;color:#605e5c;transform:scaleX(0.8446);">Role 3</div>
<div class="r" style="left:290.5px;top:886.5px;width:119.4px;height:29.5px;background:#41a0b8;"></div>
<div class="r" style="left:409.9px;top:886.5px;width:206.3px;height:29.5px;background:#a0a5d8;"></div>
<div class="t" style="left:213.8px;top:894.2px;font:23.19px/23.19px 'Liberation Sans',sans-serif;color:#605e5c;transform:scaleX(0.8446);">Role 6</div>
<div class="r" style="left:1173.0px;top:729.8px;width:13.5px;height:212.2px;background:#f1f1f1;border-radius:7px"></div>
<div class="r" style="left:1173.0px;top:729.8px;width:13.5px;height:41.8px;background:#b9b9b9;border-radius:7px"></div>
<div class="r" style="left:1224.0px;top:737.0px;width:1132.0px;height:1.4px;background:#e4e4e4;"></div>
<div class="r" style="left:1224.0px;top:740.0px;width:1132.0px;height:28.7px;background:#eeedee;"></div>
<div class="r" style="left:1224.0px;top:768.7px;width:1132.0px;height:1.4px;background:#e4e4e4;"></div>
<div class="r" style="left:1224.0px;top:800.4px;width:1132.0px;height:1.4px;background:#e4e4e4;"></div>
<div class="r" style="left:1224.0px;top:803.4px;width:1132.0px;height:28.7px;background:#eeedee;"></div>
<div class="r" style="left:1224.0px;top:832.1px;width:1132.0px;height:1.4px;background:#e4e4e4;"></div>
<div class="r" style="left:1224.0px;top:863.8px;width:1132.0px;height:1.4px;background:#e4e4e4;"></div>
<div class="r" style="left:1224.0px;top:866.8px;width:1132.0px;height:28.7px;background:#eeedee;"></div>
<div class="r" style="left:1224.0px;top:895.5px;width:1132.0px;height:1.4px;background:#e4e4e4;"></div>
<div class="r" style="left:1224.0px;top:927.2px;width:1132.0px;height:1.4px;background:#e4e4e4;"></div>
<div class="r" style="left:1224.0px;top:930.2px;width:1132.0px;height:28.7px;background:#eeedee;"></div>
<div class="r" style="left:1224.0px;top:958.9px;width:1132.0px;height:1.4px;background:#e4e4e4;"></div>
<div class="t" style="left:1233.0px;top:668.4px;font:bold 21.01px/21.01px 'Liberation Sans',sans-serif;color:#18207a;transform:scaleX(0.9239);">User Story ID</div>
<div class="t" style="left:1377.0px;top:668.4px;font:bold 21.01px/21.01px 'Liberation Sans',sans-serif;color:#18207a;transform:scaleX(0.9329);">Impacted Role</div>
<div class="t" style="left:1533.0px;top:668.4px;font:bold 21.01px/21.01px 'Liberation Sans',sans-serif;color:#18207a;transform:scaleX(0.9288);">Summary</div>
<div class="t" style="left:2188.3px;top:668.4px;font:bold 21.01px/21.01px 'Liberation Sans',sans-serif;color:#18207a;transform:scaleX(0.9497);">Type of Impact</div>
<div class="r" style="left:1224.0px;top:704.5px;width:1132.0px;height:2.0px;background:#4381b3;"></div>
<svg class="r" style="left:1377.2px;top:693.4px;" width="12.799999999999955" height="7.100000000000023" viewBox="0 0 12.799999999999955 7.100000000000023"><polygon points="0,0 12.799999999999955,0 6.399999999999977,7.100000000000023" fill="#18207a"/></svg>
<div class="r" style="left:0;top:0;width:2412px;height:961px;overflow:hidden">
<div class="t" style="left:1233.0px;top:713.8px;font:20.29px/20.29px 'Liberation Sans',sans-serif;color:#2a2a2a;transform:scaleX(0.9193);">2889</div>
<div class="t" style="left:1377.0px;top:713.8px;font:20.29px/20.29px 'Liberation Sans',sans-serif;color:#2a2a2a;transform:scaleX(0.9107);">Role 9</div>
<div class="t" style="left:1533.0px;top:713.8px;font:20.29px/20.29px 'Liberation Sans',sans-serif;color:#2a2a2a;transform:scaleX(0.9369);">User Story Example</div>
<div class="t" style="left:2188.3px;top:713.8px;font:20.29px/20.29px 'Liberation Sans',sans-serif;color:#2a2a2a;transform:scaleX(0.9536);">Direct</div>
<div class="t" style="left:1233.0px;top:744.6px;font:20.29px/20.29px 'Liberation Sans',sans-serif;color:#2a2a2a;transform:scaleX(0.9000);">3448</div>
<div class="t" style="left:1377.0px;top:744.6px;font:20.29px/20.29px 'Liberation Sans',sans-serif;color:#2a2a2a;transform:scaleX(0.9107);">Role 9</div>
<div class="t" style="left:1533.0px;top:744.6px;font:20.29px/20.29px 'Liberation Sans',sans-serif;color:#2a2a2a;transform:scaleX(0.9369);">User Story Example</div>
<div class="t" style="left:2188.3px;top:744.6px;font:20.29px/20.29px 'Liberation Sans',sans-serif;color:#2a2a2a;transform:scaleX(0.9536);">Direct</div>
<div class="t" style="left:1233.0px;top:777.2px;font:20.29px/20.29px 'Liberation Sans',sans-serif;color:#2a2a2a;transform:scaleX(0.9193);">2889</div>
<div class="t" style="left:1377.0px;top:777.2px;font:20.29px/20.29px 'Liberation Sans',sans-serif;color:#2a2a2a;transform:scaleX(0.9573);">Role 8</div>
<div class="t" style="left:1533.0px;top:777.2px;font:20.29px/20.29px 'Liberation Sans',sans-serif;color:#2a2a2a;transform:scaleX(0.9369);">User Story Example</div>
<div class="t" style="left:2188.3px;top:777.2px;font:20.29px/20.29px 'Liberation Sans',sans-serif;color:#2a2a2a;transform:scaleX(0.9536);">Direct</div>
<div class="t" style="left:1233.0px;top:808.1px;font:20.29px/20.29px 'Liberation Sans',sans-serif;color:#2a2a2a;transform:scaleX(0.9000);">3448</div>
<div class="t" style="left:1377.0px;top:808.1px;font:20.29px/20.29px 'Liberation Sans',sans-serif;color:#2a2a2a;transform:scaleX(0.9573);">Role 8</div>
<div class="t" style="left:1533.0px;top:808.1px;font:20.29px/20.29px 'Liberation Sans',sans-serif;color:#2a2a2a;transform:scaleX(0.9369);">User Story Example</div>
<div class="t" style="left:2188.3px;top:808.1px;font:20.29px/20.29px 'Liberation Sans',sans-serif;color:#2a2a2a;transform:scaleX(0.9536);">Direct</div>
<div class="t" style="left:1233.0px;top:840.8px;font:20.29px/20.29px 'Liberation Sans',sans-serif;color:#2a2a2a;transform:scaleX(0.9000);">2933</div>
<div class="t" style="left:1377.0px;top:840.8px;font:20.29px/20.29px 'Liberation Sans',sans-serif;color:#2a2a2a;transform:scaleX(0.9573);">Role 7</div>
<div class="t" style="left:1533.0px;top:840.8px;font:20.29px/20.29px 'Liberation Sans',sans-serif;color:#2a2a2a;transform:scaleX(0.9369);">User Story Example</div>
<div class="t" style="left:2188.3px;top:840.8px;font:20.29px/20.29px 'Liberation Sans',sans-serif;color:#2a2a2a;transform:scaleX(0.9536);">Direct</div>
<div class="t" style="left:1233.0px;top:872.6px;font:20.29px/20.29px 'Liberation Sans',sans-serif;color:#2a2a2a;transform:scaleX(0.9000);">2907</div>
<div class="t" style="left:1377.0px;top:872.6px;font:20.29px/20.29px 'Liberation Sans',sans-serif;color:#2a2a2a;transform:scaleX(0.9573);">Role 7</div>
<div class="t" style="left:1533.0px;top:872.6px;font:20.29px/20.29px 'Liberation Sans',sans-serif;color:#2a2a2a;transform:scaleX(0.9369);">User Story Example</div>
<div class="t" style="left:2188.3px;top:872.6px;font:20.29px/20.29px 'Liberation Sans',sans-serif;color:#2a2a2a;transform:scaleX(0.9842);">Indirect</div>
<div class="t" style="left:1233.0px;top:903.3px;font:20.29px/20.29px 'Liberation Sans',sans-serif;color:#2a2a2a;transform:scaleX(0.9000);">2908</div>
<div class="t" style="left:1377.0px;top:903.3px;font:20.29px/20.29px 'Liberation Sans',sans-serif;color:#2a2a2a;transform:scaleX(0.9573);">Role 7</div>
<div class="t" style="left:1533.0px;top:903.3px;font:20.29px/20.29px 'Liberation Sans',sans-serif;color:#2a2a2a;transform:scaleX(0.9369);">User Story Example</div>
<div class="t" style="left:2188.3px;top:903.3px;font:20.29px/20.29px 'Liberation Sans',sans-serif;color:#2a2a2a;transform:scaleX(0.9842);">Indirect</div>
<div class="t" style="left:1233.0px;top:936.1px;font:20.29px/20.29px 'Liberation Sans',sans-serif;color:#2a2a2a;transform:scaleX(0.9000);">2999</div>
<div class="t" style="left:1377.0px;top:936.1px;font:20.29px/20.29px 'Liberation Sans',sans-serif;color:#2a2a2a;transform:scaleX(0.9573);">Role 7</div>
<div class="t" style="left:1533.0px;top:936.1px;font:20.29px/20.29px 'Liberation Sans',sans-serif;color:#2a2a2a;transform:scaleX(0.9369);">User Story Example</div>
<div class="t" style="left:2188.3px;top:936.1px;font:20.29px/20.29px 'Liberation Sans',sans-serif;color:#2a2a2a;transform:scaleX(0.9842);">Indirect</div>
</div>
<div class="r" style="left:2356.0px;top:662.0px;width:16.5px;height:308.0px;background:#f1f1f1;"></div>
<div class="r" style="left:2356.0px;top:712.6px;width:16.5px;height:18.9px;background:#c8c8c8;"></div>
<svg class="r" style="left:2356.25px;top:679.5px;" width="16" height="14" viewBox="0 0 16 14"><polyline points="2.5,10 8,3.5 13.5,10" fill="none" stroke="#333" stroke-width="1.6"/></svg>
<svg class="r" style="left:2356.25px;top:938.5px;" width="16" height="14" viewBox="0 0 16 14"><polyline points="2.5,3 8,9.5 13.5,3" fill="none" stroke="#333" stroke-width="1.6"/></svg>
<div class="r" style="left:1221.0px;top:971.0px;width:1135.0px;height:16.0px;background:#f1f1f1;"></div>
<div class="r" style="left:1271.0px;top:971.0px;width:971.0px;height:16.0px;background:#c8c8c8;"></div>
<svg class="r" style="left:1237px;top:971.0px;" width="16" height="16" viewBox="0 0 16 16"><polyline points="11,3 4.5,8 11,13" fill="none" stroke="#333" stroke-width="1.6"/></svg>
<svg class="r" style="left:2323px;top:971.0px;" width="16" height="16" viewBox="0 0 16 16"><polyline points="5,3 11.5,8 5,13" fill="none" stroke="#333" stroke-width="1.6"/></svg>
<div class="r" style="left:38.6px;top:1115.0px;width:1133.4px;height:1.4px;background:#e4e4e4;"></div>
<div class="r" style="left:38.6px;top:1118.0px;width:1133.4px;height:28.7px;background:#eeedee;"></div>
<div class="r" style="left:38.6px;top:1146.7px;width:1133.4px;height:1.4px;background:#e4e4e4;"></div>
<div class="r" style="left:38.6px;top:1178.5px;width:1133.4px;height:1.4px;background:#e4e4e4;"></div>
<div class="r" style="left:38.6px;top:1181.5px;width:1133.4px;height:28.7px;background:#eeedee;"></div>
<div class="r" style="left:38.6px;top:1210.2px;width:1133.4px;height:1.4px;background:#e4e4e4;"></div>
<div class="r" style="left:38.6px;top:1241.9px;width:1133.4px;height:1.4px;background:#e4e4e4;"></div>
<div class="r" style="left:38.6px;top:1244.9px;width:1133.4px;height:28.7px;background:#eeedee;"></div>
<div class="r" style="left:38.6px;top:1273.6px;width:1133.4px;height:1.4px;background:#e4e4e4;"></div>
<div class="r" style="left:38.6px;top:1305.3px;width:1133.4px;height:1.4px;background:#e4e4e4;"></div>
<div class="r" style="left:38.6px;top:1308.3px;width:1133.4px;height:14.4px;background:#eeedee;"></div>
<div class="t" style="left:47.8px;top:1048.0px;font:bold 21.01px/21.01px 'Liberation Sans',sans-serif;color:#18207a;transform:scaleX(0.9302);">Employee Name</div>
<div class="t" style="left:415.5px;top:1048.0px;font:bold 21.01px/21.01px 'Liberation Sans',sans-serif;color:#18207a;transform:scaleX(0.9349);">Supervisor Name</div>
<div class="t" style="left:652.0px;top:1048.0px;font:bold 21.01px/21.01px 'Liberation Sans',sans-serif;color:#18207a;transform:scaleX(0.8993);">Team</div>
<div class="t" style="left:942.0px;top:1048.0px;font:bold 21.01px/21.01px 'Liberation Sans',sans-serif;color:#18207a;transform:scaleX(0.9469);">Director Name</div>
<div class="r" style="left:38.6px;top:1083.0px;width:1133.4px;height:2.0px;background:#4381b3;"></div>
<div class="r" style="left:0;top:0;width:2412px;height:1322.7px;overflow:hidden">
<div class="t" style="left:47.8px;top:1091.9px;font:20.29px/20.29px 'Liberation Sans',sans-serif;color:#2a2a2a;transform:scaleX(0.9129);">Employee 1</div>
<div class="t" style="left:415.5px;top:1091.9px;font:20.29px/20.29px 'Liberation Sans',sans-serif;color:#2a2a2a;transform:scaleX(0.9777);">Supervisor 1</div>
<div class="t" style="left:652.0px;top:1091.9px;font:20.29px/20.29px 'Liberation Sans',sans-serif;color:#2a2a2a;">Hollywood</div>
<div class="t" style="left:942.0px;top:1091.9px;font:20.29px/20.29px 'Liberation Sans',sans-serif;color:#2a2a2a;transform:scaleX(0.9664);">Director 1</div>
<div class="t" style="left:47.8px;top:1123.3px;font:20.29px/20.29px 'Liberation Sans',sans-serif;color:#2a2a2a;transform:scaleX(0.9530);">Employee 10</div>
<div class="t" style="left:415.5px;top:1123.3px;font:20.29px/20.29px 'Liberation Sans',sans-serif;color:#2a2a2a;transform:scaleX(0.9707);">Supervisor 10</div>
<div class="t" style="left:652.0px;top:1123.3px;font:20.29px/20.29px 'Liberation Sans',sans-serif;color:#2a2a2a;">Hollywood</div>
<div class="t" style="left:942.0px;top:1123.3px;font:20.29px/20.29px 'Liberation Sans',sans-serif;color:#2a2a2a;transform:scaleX(0.9664);">Director 1</div>
<div class="t" style="left:47.8px;top:1154.8px;font:20.29px/20.29px 'Liberation Sans',sans-serif;color:#2a2a2a;transform:scaleX(0.9653);">Employee 11</div>
<div class="t" style="left:415.5px;top:1154.8px;font:20.29px/20.29px 'Liberation Sans',sans-serif;color:#2a2a2a;transform:scaleX(0.9825);">Supervisor 11</div>
<div class="t" style="left:652.0px;top:1154.8px;font:20.29px/20.29px 'Liberation Sans',sans-serif;color:#2a2a2a;transform:scaleX(0.9833);">Juanita</div>
<div class="t" style="left:942.0px;top:1154.8px;font:20.29px/20.29px 'Liberation Sans',sans-serif;color:#2a2a2a;transform:scaleX(0.9664);">Director 1</div>
<div class="t" style="left:47.8px;top:1186.2px;font:20.29px/20.29px 'Liberation Sans',sans-serif;color:#2a2a2a;transform:scaleX(0.9530);">Employee 12</div>
<div class="t" style="left:415.5px;top:1186.2px;font:20.29px/20.29px 'Liberation Sans',sans-serif;color:#2a2a2a;transform:scaleX(0.9707);">Supervisor 12</div>
<div class="t" style="left:652.0px;top:1186.2px;font:20.29px/20.29px 'Liberation Sans',sans-serif;color:#2a2a2a;">Hollywood</div>
<div class="t" style="left:942.0px;top:1186.2px;font:20.29px/20.29px 'Liberation Sans',sans-serif;color:#2a2a2a;transform:scaleX(0.9664);">Director 1</div>
<div class="t" style="left:47.8px;top:1217.7px;font:20.29px/20.29px 'Liberation Sans',sans-serif;color:#2a2a2a;transform:scaleX(0.9586);">Employee 2</div>
<div class="t" style="left:415.5px;top:1217.7px;font:20.29px/20.29px 'Liberation Sans',sans-serif;color:#2a2a2a;transform:scaleX(0.9777);">Supervisor 2</div>
<div class="t" style="left:652.0px;top:1217.7px;font:20.29px/20.29px 'Liberation Sans',sans-serif;color:#2a2a2a;transform:scaleX(0.9702);">Crenshaw</div>
<div class="t" style="left:942.0px;top:1217.7px;font:20.29px/20.29px 'Liberation Sans',sans-serif;color:#2a2a2a;transform:scaleX(0.9664);">Director 1</div>
<div class="t" style="left:47.8px;top:1251.0px;font:20.29px/20.29px 'Liberation Sans',sans-serif;color:#2a2a2a;transform:scaleX(0.9586);">Employee 3</div>
<div class="t" style="left:415.5px;top:1251.0px;font:20.29px/20.29px 'Liberation Sans',sans-serif;color:#2a2a2a;transform:scaleX(0.9777);">Supervisor 3</div>
<div class="t" style="left:652.0px;top:1251.0px;font:20.29px/20.29px 'Liberation Sans',sans-serif;color:#2a2a2a;transform:scaleX(0.9702);">Crenshaw</div>
<div class="t" style="left:942.0px;top:1251.0px;font:20.29px/20.29px 'Liberation Sans',sans-serif;color:#2a2a2a;transform:scaleX(0.9664);">Director 1</div>
<div class="t" style="left:47.8px;top:1282.5px;font:20.29px/20.29px 'Liberation Sans',sans-serif;color:#2a2a2a;transform:scaleX(0.9586);">Employee 4</div>
<div class="t" style="left:415.5px;top:1282.5px;font:20.29px/20.29px 'Liberation Sans',sans-serif;color:#2a2a2a;transform:scaleX(0.9777);">Supervisor 4</div>
<div class="t" style="left:652.0px;top:1282.5px;font:20.29px/20.29px 'Liberation Sans',sans-serif;color:#2a2a2a;">Ventura</div>
<div class="t" style="left:942.0px;top:1282.5px;font:20.29px/20.29px 'Liberation Sans',sans-serif;color:#2a2a2a;transform:scaleX(0.9664);">Director 1</div>
<div class="t" style="left:47.8px;top:1315.8px;font:20.29px/20.29px 'Liberation Sans',sans-serif;color:#2a2a2a;transform:scaleX(0.9586);">Employee 5</div>
<div class="t" style="left:415.5px;top:1315.8px;font:20.29px/20.29px 'Liberation Sans',sans-serif;color:#2a2a2a;transform:scaleX(0.9777);">Supervisor 5</div>
<div class="t" style="left:652.0px;top:1315.8px;font:20.29px/20.29px 'Liberation Sans',sans-serif;color:#2a2a2a;transform:scaleX(0.9825);">Huntington Park</div>
<div class="t" style="left:942.0px;top:1315.8px;font:20.29px/20.29px 'Liberation Sans',sans-serif;color:#2a2a2a;transform:scaleX(0.9664);">Director 1</div>
</div>
<div class="r" style="left:1174.6px;top:1041.0px;width:13.4px;height:281.0px;background:#f1f1f1;"></div>
<div class="r" style="left:1174.6px;top:1091.5px;width:13.4px;height:18.5px;background:#c8c8c8;"></div>
<svg class="r" style="left:1173.3px;top:1060px;" width="16" height="14" viewBox="0 0 16 14"><polyline points="2.5,10 8,3.5 13.5,10" fill="none" stroke="#333" stroke-width="1.6"/></svg>
<svg class="r" style="left:1173.3px;top:1290px;" width="16" height="14" viewBox="0 0 16 14"><polyline points="2.5,3 8,9.5 13.5,3" fill="none" stroke="#333" stroke-width="1.6"/></svg>
<div class="r" style="left:36.0px;top:1322.7px;width:1136.0px;height:16.0px;background:#f1f1f1;"></div>
<div class="r" style="left:86.0px;top:1322.7px;width:633.0px;height:16.0px;background:#c8c8c8;"></div>
<svg class="r" style="left:52px;top:1322.7px;" width="16" height="16" viewBox="0 0 16 16"><polyline points="11,3 4.5,8 11,13" fill="none" stroke="#333" stroke-width="1.6"/></svg>
<svg class="r" style="left:1139px;top:1322.7px;" width="16" height="16" viewBox="0 0 16 16"><polyline points="5,3 11.5,8 5,13" fill="none" stroke="#333" stroke-width="1.6"/></svg>
<div class="r" style="left:1224.0px;top:1114.4px;width:1132.0px;height:1.4px;background:#e4e4e4;"></div>
<div class="r" style="left:1224.0px;top:1117.4px;width:1132.0px;height:28.6px;background:#eeedee;"></div>
<div class="r" style="left:1224.0px;top:1146.0px;width:1132.0px;height:1.4px;background:#e4e4e4;"></div>
<div class="r" style="left:1224.0px;top:1177.6px;width:1132.0px;height:1.4px;background:#e4e4e4;"></div>
<div class="r" style="left:1224.0px;top:1180.6px;width:1132.0px;height:28.6px;background:#eeedee;"></div>
<div class="r" style="left:1224.0px;top:1209.2px;width:1132.0px;height:1.4px;background:#e4e4e4;"></div>
<div class="r" style="left:1224.0px;top:1240.8px;width:1132.0px;height:1.4px;background:#e4e4e4;"></div>
<div class="r" style="left:1224.0px;top:1243.8px;width:1132.0px;height:28.6px;background:#eeedee;"></div>
<div class="r" style="left:1224.0px;top:1272.4px;width:1132.0px;height:1.4px;background:#e4e4e4;"></div>
<div class="t" style="left:1232.6px;top:1045.3px;font:bold 21.01px/21.01px 'Liberation Sans',sans-serif;color:#18207a;transform:scaleX(0.9382);">Change Impact ID</div>
<div class="t" style="left:1420.5px;top:1045.3px;font:bold 21.01px/21.01px 'Liberation Sans',sans-serif;color:#18207a;transform:scaleX(0.9534);">Impact Title</div>
<div class="t" style="left:1558.0px;top:1045.3px;font:bold 21.01px/21.01px 'Liberation Sans',sans-serif;color:#18207a;transform:scaleX(0.9308);">Impacted Role</div>
<div class="t" style="left:1713.0px;top:1045.3px;font:bold 21.01px/21.01px 'Liberation Sans',sans-serif;color:#18207a;transform:scaleX(0.9307);">Change Impact Description "so what"</div>
<div class="t" style="left:2147.0px;top:1045.3px;font:bold 21.01px/21.01px 'Liberation Sans',sans-serif;color:#18207a;transform:scaleX(0.9420);">Overall Impact Rating</div>
<div class="r" style="left:1224.0px;top:1082.0px;width:1132.0px;height:2.0px;background:#4381b3;"></div>
<svg class="r" style="left:1232.8px;top:1070.5px;" width="12.799999999999955" height="7.099999999999909" viewBox="0 0 12.799999999999955 7.099999999999909"><polygon points="0,0 12.799999999999955,0 6.399999999999977,7.099999999999909" fill="#18207a"/></svg>
<div class="r" style="left:0;top:0;width:2412px;height:1322.7px;overflow:hidden">
<div class="t" style="left:1232.6px;top:1090.0px;font:20.29px/20.29px 'Liberation Sans',sans-serif;color:#2a2a2a;transform:scaleX(0.9000);">9</div>
<div class="t" style="left:1420.5px;top:1090.0px;font:20.29px/20.29px 'Liberation Sans',sans-serif;color:#2a2a2a;transform:scaleX(0.9875);">Impact title 1</div>
<div class="t" style="left:1558.0px;top:1090.0px;font:20.29px/20.29px 'Liberation Sans',sans-serif;color:#2a2a2a;transform:scaleX(0.9573);">Role 2</div>
<div class="t" style="left:1713.0px;top:1090.0px;font:20.29px/20.29px 'Liberation Sans',sans-serif;color:#2a2a2a;transform:scaleX(0.9819);">Change impact of new system implementation.</div>
<div class="t" style="left:2147.0px;top:1090.0px;font:20.29px/20.29px 'Liberation Sans',sans-serif;color:#2a2a2a;transform:scaleX(0.9500);">M</div>
<div class="t" style="left:1232.6px;top:1122.4px;font:20.29px/20.29px 'Liberation Sans',sans-serif;color:#2a2a2a;transform:scaleX(0.9440);">8.3</div>
<div class="t" style="left:1420.5px;top:1122.4px;font:20.29px/20.29px 'Liberation Sans',sans-serif;color:#2a2a2a;transform:scaleX(0.9970);">Impact title 2</div>
<div class="t" style="left:1558.0px;top:1122.4px;font:20.29px/20.29px 'Liberation Sans',sans-serif;color:#2a2a2a;transform:scaleX(0.9346);">Role 11</div>
<div class="t" style="left:1713.0px;top:1122.4px;font:20.29px/20.29px 'Liberation Sans',sans-serif;color:#2a2a2a;transform:scaleX(0.9819);">Change impact of new system implementation.</div>
<div class="t" style="left:2147.0px;top:1122.4px;font:20.29px/20.29px 'Liberation Sans',sans-serif;color:#2a2a2a;transform:scaleX(0.9500);">M</div>
<div class="t" style="left:1232.6px;top:1153.3px;font:20.29px/20.29px 'Liberation Sans',sans-serif;color:#2a2a2a;transform:scaleX(0.9440);">8.2</div>
<div class="t" style="left:1420.5px;top:1153.3px;font:20.29px/20.29px 'Liberation Sans',sans-serif;color:#2a2a2a;transform:scaleX(0.9970);">Impact title 3</div>
<div class="t" style="left:1558.0px;top:1153.3px;font:20.29px/20.29px 'Liberation Sans',sans-serif;color:#2a2a2a;transform:scaleX(0.9346);">Role 11</div>
<div class="t" style="left:1713.0px;top:1153.3px;font:20.29px/20.29px 'Liberation Sans',sans-serif;color:#2a2a2a;transform:scaleX(0.9819);">Change impact of new system implementation.</div>
<div class="t" style="left:2147.0px;top:1153.3px;font:20.29px/20.29px 'Liberation Sans',sans-serif;color:#2a2a2a;transform:scaleX(0.9500);">M</div>
<div class="t" style="left:1232.6px;top:1185.3px;font:20.29px/20.29px 'Liberation Sans',sans-serif;color:#2a2a2a;transform:scaleX(0.9440);">8.1</div>
<div class="t" style="left:1420.5px;top:1185.3px;font:20.29px/20.29px 'Liberation Sans',sans-serif;color:#2a2a2a;transform:scaleX(0.9970);">Impact title 4</div>
<div class="t" style="left:1558.0px;top:1185.3px;font:20.29px/20.29px 'Liberation Sans',sans-serif;color:#2a2a2a;transform:scaleX(0.9480);">Role 12</div>
<div class="t" style="left:1713.0px;top:1185.3px;font:20.29px/20.29px 'Liberation Sans',sans-serif;color:#2a2a2a;transform:scaleX(0.9819);">Change impact of new system implementation.</div>
<div class="t" style="left:2147.0px;top:1185.3px;font:20.29px/20.29px 'Liberation Sans',sans-serif;color:#2a2a2a;transform:scaleX(0.9500);">M</div>
<div class="t" style="left:1232.6px;top:1217.7px;font:20.29px/20.29px 'Liberation Sans',sans-serif;color:#2a2a2a;transform:scaleX(0.8996);">79.2</div>
<div class="t" style="left:1420.5px;top:1217.7px;font:20.29px/20.29px 'Liberation Sans',sans-serif;color:#2a2a2a;transform:scaleX(0.9970);">Impact title 5</div>
<div class="t" style="left:1558.0px;top:1217.7px;font:20.29px/20.29px 'Liberation Sans',sans-serif;color:#2a2a2a;transform:scaleX(0.9346);">Role 11</div>
<div class="t" style="left:1713.0px;top:1217.7px;font:20.29px/20.29px 'Liberation Sans',sans-serif;color:#2a2a2a;transform:scaleX(0.9819);">Change impact of new system implementation.</div>
<div class="t" style="left:2147.0px;top:1217.7px;font:20.29px/20.29px 'Liberation Sans',sans-serif;color:#2a2a2a;transform:scaleX(0.9500);">L</div>
<div class="t" style="left:1232.6px;top:1249.1px;font:20.29px/20.29px 'Liberation Sans',sans-serif;color:#2a2a2a;transform:scaleX(0.9314);">79.1</div>
<div class="t" style="left:1420.5px;top:1249.1px;font:20.29px/20.29px 'Liberation Sans',sans-serif;color:#2a2a2a;transform:scaleX(0.9970);">Impact title 6</div>
<div class="t" style="left:1558.0px;top:1249.1px;font:20.29px/20.29px 'Liberation Sans',sans-serif;color:#2a2a2a;transform:scaleX(0.9573);">Role 2</div>
<div class="t" style="left:1713.0px;top:1249.1px;font:20.29px/20.29px 'Liberation Sans',sans-serif;color:#2a2a2a;transform:scaleX(0.9819);">Change impact of new system implementation.</div>
<div class="t" style="left:2147.0px;top:1249.1px;font:20.29px/20.29px 'Liberation Sans',sans-serif;color:#2a2a2a;transform:scaleX(0.9500);">L</div>
<div class="t" style="left:1232.6px;top:1280.6px;font:20.29px/20.29px 'Liberation Sans',sans-serif;color:#2a2a2a;transform:scaleX(0.9314);">74.4</div>
<div class="t" style="left:1420.5px;top:1280.6px;font:20.29px/20.29px 'Liberation Sans',sans-serif;color:#2a2a2a;transform:scaleX(1.0109);">Impact title</div>
<div class="t" style="left:1420.5px;top:1303.3px;font:20.29px/20.29px 'Liberation Sans',sans-serif;color:#2a2a2a;transform:scaleX(0.9000);">10</div>
<div class="t" style="left:1558.0px;top:1280.6px;font:20.29px/20.29px 'Liberation Sans',sans-serif;color:#2a2a2a;transform:scaleX(0.9573);">Role 8</div>
<div class="t" style="left:1713.0px;top:1280.6px;font:20.29px/20.29px 'Liberation Sans',sans-serif;color:#2a2a2a;transform:scaleX(0.9819);">Change impact of new system implementation.</div>
<div class="t" style="left:2147.0px;top:1280.6px;font:20.29px/20.29px 'Liberation Sans',sans-serif;color:#2a2a2a;transform:scaleX(0.9500);">L</div>
</div>
<div class="r" style="left:2356.0px;top:1040.0px;width:16.5px;height:282.0px;background:#f1f1f1;"></div>
<div class="r" style="left:2356.0px;top:1090.0px;width:16.5px;height:19.5px;background:#c8c8c8;"></div>
<svg class="r" style="left:2356.25px;top:1057px;" width="16" height="14" viewBox="0 0 16 14"><polyline points="2.5,10 8,3.5 13.5,10" fill="none" stroke="#333" stroke-width="1.6"/></svg>
<svg class="r" style="left:2356.25px;top:1290px;" width="16" height="14" viewBox="0 0 16 14"><polyline points="2.5,3 8,9.5 13.5,3" fill="none" stroke="#333" stroke-width="1.6"/></svg>
<div class="r" style="left:1221.0px;top:1322.7px;width:1135.0px;height:16.0px;background:#f1f1f1;"></div>
<div class="r" style="left:1271.0px;top:1322.7px;width:908.0px;height:16.0px;background:#c8c8c8;"></div>
<svg class="r" style="left:1237px;top:1322.7px;" width="16" height="16" viewBox="0 0 16 16"><polyline points="11,3 4.5,8 11,13" fill="none" stroke="#333" stroke-width="1.6"/></svg>
<svg class="r" style="left:2323px;top:1322.7px;" width="16" height="16" viewBox="0 0 16 16"><polyline points="5,3 11.5,8 5,13" fill="none" stroke="#333" stroke-width="1.6"/></svg>
</body></html>
